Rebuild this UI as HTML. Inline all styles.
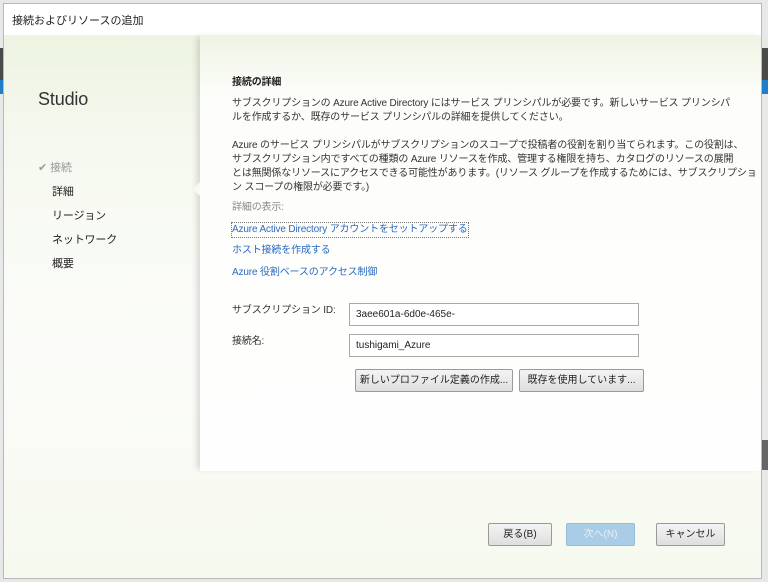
<!DOCTYPE html>
<html><head><meta charset="utf-8"><style>
*{margin:0;padding:0;box-sizing:border-box}
body{width:768px;height:582px;overflow:hidden;background:#e8e8e8;position:relative;font-family:"Liberation Sans","Noto Sans CJK JP",sans-serif;font-size:10px;color:#333}
.abs{position:absolute}
.dlg{left:3px;top:3px;width:759px;height:576px;border:1px solid #b8b8b8;background:linear-gradient(180deg,#eaf2de 0%,#f6f9f0 25%,#fbfcf9 60%,#f6f9ee 100%);overflow:hidden}
.title{left:0;top:0;width:100%;height:31px;background:#fff;font-size:11px;padding:8px 0 0 8px;color:#222}
.content{left:196px;top:31px;width:563px;height:436px;background:linear-gradient(180deg,rgba(250,252,246,0) 0%,#fdfdfb 15%,#fefefe);box-shadow:-5px 0 6px -2px rgba(0,0,0,.14)}
.t{position:absolute;white-space:nowrap;line-height:14px;letter-spacing:-0.15px}
.link{color:#2a6bc2}
.inp{position:absolute;background:#fff;border:1px solid #aaa;height:23px;padding:5px 6px;font-size:10px;color:#222}
.btn{position:absolute;height:23px;border:1px solid #9a9a9a;border-radius:2px;background:linear-gradient(#f4f4f4,#dedede);font-size:10px;text-align:center;line-height:21px;color:#222;white-space:nowrap}
</style></head><body>
<div class="abs" style="left:0;top:48px;width:4px;height:32px;background:#4a4a4a"></div>
<div class="abs" style="left:0;top:80px;width:4px;height:14px;background:#1e7ec8"></div>
<div class="abs" style="left:762px;top:48px;width:6px;height:32px;background:#4a4a4a"></div>
<div class="abs" style="left:762px;top:80px;width:6px;height:14px;background:#1e7ec8"></div>
<div class="abs" style="left:762px;top:440px;width:6px;height:30px;background:#666"></div>
<div class="abs dlg">
 <div class="abs title">接続およびリソースの追加</div>
 <div class="t" style="left:34px;top:84px;font-size:18px;line-height:22px;color:#333">Studio</div>
 <div class="t" style="left:34px;top:157px;color:#999;font-size:11px">✔ 接続</div>
 <div class="t" style="left:48px;top:181px;color:#222;font-size:11px">詳細</div>
 <div class="t" style="left:48px;top:205px;color:#222;font-size:11px">リージョン</div>
 <div class="t" style="left:48px;top:229px;color:#222;font-size:11px">ネットワーク</div>
 <div class="t" style="left:48px;top:253px;color:#222;font-size:11px">概要</div>
 <div class="abs content"></div>
 <div class="abs" style="left:189px;top:178px;width:0;height:0;border-top:7px solid transparent;border-bottom:7px solid transparent;border-right:7px solid #f8f9f5"></div>
 <div class="t" style="left:228px;top:72px;font-weight:bold;color:#222">接続の詳細</div>
 <div class="t" style="left:228px;top:93px">サブスクリプションの Azure Active Directory にはサービス プリンシパルが必要です。新しいサービス プリンシパ<br>ルを作成するか、既存のサービス プリンシパルの詳細を提供してください。</div>
 <div class="t" style="left:228px;top:135px">Azure のサービス プリンシパルがサブスクリプションのスコープで投稿者の役割を割り当てられます。この役割は、<br>サブスクリプション内ですべての種類の Azure リソースを作成、管理する権限を持ち、カタログのリソースの展開<br>とは無関係なリソースにアクセスできる可能性があります。(リソース グループを作成するためには、サブスクリプショ<br>ン スコープの権限が必要です。)</div>
 <div class="t" style="left:228px;top:197px;color:#888">詳細の表示:</div>
 <div class="t link" style="left:228px;top:219px;outline:1px dotted #777">Azure Active Directory アカウントをセットアップする</div>
 <div class="t link" style="left:228px;top:240px">ホスト接続を作成する</div>
 <div class="t link" style="left:228px;top:262px">Azure 役割ベースのアクセス制御</div>
 <div class="t" style="left:228px;top:300px">サブスクリプション ID:</div>
 <div class="t" style="left:228px;top:331px">接続名:</div>
 <div class="inp" style="left:345px;top:299px;width:290px">3aee601a-6d0e-465e-</div>
 <div class="inp" style="left:345px;top:330px;width:290px">tushigami_Azure</div>
 <div class="btn" style="left:351px;top:365px;width:158px">新しいプロファイル定義の作成...</div>
 <div class="btn" style="left:515px;top:365px;width:125px">既存を使用しています...</div>
 <div class="btn" style="left:484px;top:519px;width:64px">戻る(B)</div>
 <div class="btn" style="left:562px;top:519px;width:69px;background:#a9cde6;border-color:#94bcd8;color:#e6f1f9">次へ(N)</div>
 <div class="btn" style="left:652px;top:519px;width:69px">キャンセル</div>
</div>
</body></html>
